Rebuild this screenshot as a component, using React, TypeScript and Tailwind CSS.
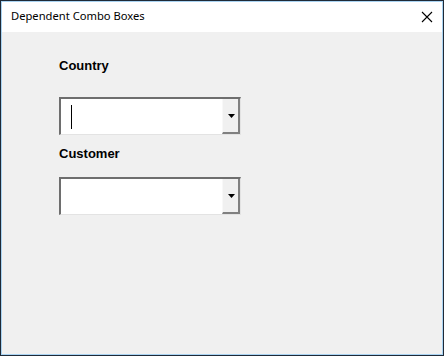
import React from "react";

function Combo({ caret }: { caret?: boolean }) {
  return (
    <div className="flex h-[38px] w-[182px] border-t-2 border-l-2 border-t-[#6e6e6e] border-l-[#6e6e6e] border-r border-b border-r-[#e3e3e3] border-b-[#e3e3e3] bg-white">
      <div className="flex flex-1 items-center pl-[10px]">
        {caret && <div className="h-[24px] w-[1px] bg-black" />}
      </div>
      <div className="flex w-[18px] items-center justify-center border-l border-l-[#f8f8f8] border-r-2 border-b-2 border-r-[#808080] border-b-[#808080] bg-[#f0f0f0] pl-[1px]">
        <svg width="7" height="4" viewBox="0 0 7 4">
          <polygon points="0,0 7,0 3.5,4" fill="#000" />
        </svg>
      </div>
    </div>
  );
}

export default function App() {
  return (
    <div className="h-[356px] w-[444px] border border-[#1f2a37]">
      <div className="flex h-full w-full flex-col border border-[#a9d3f2]">
        <div
          className="flex h-[30px] items-center justify-between bg-white pl-[9px] pr-[9px] text-[11.2px] text-black"
          style={{ fontFamily: '"Noto Sans", "Open Sans", sans-serif' }}
        >
          <span className="pb-[1px]">Dependent Combo Boxes</span>
          <svg width="12" height="12" viewBox="0 0 12 12">
            <path d="M1 1 L11 11 M11 1 L1 11" stroke="#000" strokeWidth="1.1" fill="none" />
          </svg>
        </div>
        <div
          className="flex flex-1 flex-col bg-[#f0f0f0] pl-[57px] pt-[26px]"
          style={{ fontFamily: '"Liberation Sans", Arial, sans-serif' }}
        >
          <div className="h-[16px] text-[13px] font-bold leading-[16px] text-black">Country</div>
          <div className="mt-[23px]">
            <Combo caret />
          </div>
          <div className="mt-[11px] h-[16px] text-[13px] font-bold leading-[16px] text-black">Customer</div>
          <div className="mt-[15px]">
            <Combo />
          </div>
        </div>
      </div>
    </div>
  );
}
